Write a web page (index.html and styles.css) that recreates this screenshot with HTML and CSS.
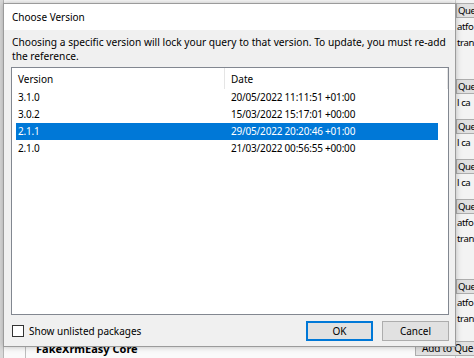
FILE: index.html
```html
<!DOCTYPE html>
<html>
<head>
<meta charset="utf-8">
<link rel="stylesheet" href="styles.css">
</head>
<body>
<div class="app">
  <div class="sidebar"></div>
  <div class="main">
    <div class="pkg-spacer"></div>
    <div class="pkg">
      <div class="pkg-name">FakeXrmEasy Core</div>
      <div class="pkg-add">Add to Que</div>
    </div>
  </div>
  <div class="rightcol">
    <div class="card tall first"><div class="card-btn">Que</div><div class="card-line">atfo</div><div class="card-line">tran</div></div>
    <div class="card"><div class="card-btn">Que</div><div class="card-line">l ca</div></div>
    <div class="card"><div class="card-btn">Que</div><div class="card-line">l ca</div></div>
    <div class="card"><div class="card-btn">Que</div><div class="card-line">l ca</div></div>
    <div class="card tall"><div class="card-btn">Que</div><div class="card-line">atfo</div><div class="card-line">tran</div></div>
    <div class="card tall"><div class="card-btn">Que</div><div class="card-line">atfo</div><div class="card-line">tran</div></div>
  </div>
</div>

<div class="dialog">
  <div class="titlebar">Choose Version</div>
  <div class="dbody">
    <p class="desc">Choosing a specific version will lock your query to that version. To update, you must re-add the reference.</p>
    <div class="listbox">
      <div class="lhead">
        <div class="hcol hver">Version</div>
        <div class="hcol hdate">Date</div>
      </div>
      <div class="lrow"><div class="cver">3.1.0</div><div class="cdate">20/05/2022 11:11:51 +01:00</div></div>
      <div class="lrow"><div class="cver">3.0.2</div><div class="cdate">15/03/2022 15:17:01 +00:00</div></div>
      <div class="lrow sel"><div class="cver">2.1.1</div><div class="cdate">29/05/2022 20:20:46 +01:00</div></div>
      <div class="lrow"><div class="cver">2.1.0</div><div class="cdate">21/03/2022 00:56:55 +00:00</div></div>
    </div>
    <div class="footer">
      <label class="chk"><span class="box"></span><span>Show unlisted packages</span></label>
      <div class="btns">
        <button class="btn ok">OK</button>
        <button class="btn">Cancel</button>
      </div>
    </div>
  </div>
</div>
</body>
</html>
```
FILE: styles.css
```css
* { box-sizing: border-box; }
html, body { margin: 0; padding: 0; }
body {
  width: 474px;
  height: 358px;
  overflow: hidden;
  position: relative;
  background: #f3f3f3;
  font-family: "Noto Sans", "Liberation Sans", sans-serif;
  font-size: 10px;
  color: #000;
}
.app {
  display: flex;
  width: 474px;
  height: 358px;
}
.sidebar {
  width: 4px;
  background: #d9d9d9;
  border-right: 1px solid #b5b5b5;
}
.main {
  flex: 1;
  display: flex;
  flex-direction: column;
  background: #fafafa;
}
.pkg-spacer { flex: 1; }
.pkg {
  height: 14px;
  display: flex;
  align-items: flex-start;
  border-left: 1px solid #bdbdbd;
  margin-left: 21px;
  padding-left: 10px;
}
.pkg-name {
  font-weight: bold;
  font-size: 11px;
  line-height: 12px;
  margin-top: -1px;
  flex: 1;
}
.pkg-add {
  position: relative;
  z-index: 2;
  background: #e1e1e1;
  border: 1px solid #adadad;
  border-right: none;
  padding: 0 0 0 6px;
  line-height: 13px;
  width: 59px;
  margin-right: -19px;
  margin-top: -3px;
  white-space: nowrap;
  letter-spacing: -0.2px;
}
.rightcol {
  width: 19px;
  overflow: hidden;
  background: #f3f3f3;
  border-left: 1px solid #cfcfcf;
  padding-top: 3px;
  white-space: nowrap;
  font-size: 9.6px;
  letter-spacing: -0.4px;
}
.card { height: 40px; }
.card.tall { height: 80px; }
.card.first { height: 76px; }
.card-btn {
  height: 15px;
  line-height: 13px;
  background: #e1e1e1;
  border: 1px solid #adadad;
  border-right: none;
  padding-left: 1px;
  margin-bottom: 1px;
}
.card-line {
  line-height: 16px;
  padding-left: 1px;
}

.dialog {
  position: absolute;
  left: 3px;
  top: 3px;
  width: 453px;
  height: 344px;
  background: #f0f0f0;
  border: 1px solid #9b9b9b;
  box-shadow: 0 0 6px rgba(0,0,0,0.25);
  display: flex;
  flex-direction: column;
  z-index: 5;
}
.titlebar {
  height: 27px;
  background: #fff;
  line-height: 26px;
  padding-left: 8px;
  font-size: 10px;
}
.dbody {
  flex: 1;
  display: flex;
  flex-direction: column;
  padding: 5px 6px 5px 7px;
}
.desc {
  margin: 0 0 0 1px;
  line-height: 14px;
  font-size: 10.2px;
}
.listbox {
  margin-top: 4px;
  height: 248px;
  background: #fff;
  border: 1px solid #828790;
  width: 438px;
}
.lhead {
  display: flex;
  height: 21px;
  align-items: stretch;
}
.hcol {
  line-height: 22px;
  padding-left: 6px;
  border-right: 1px solid #e5e5e5;
}
.hver { width: 213px; }
.hdate { width: 223px; }
.lrow {
  display: flex;
  height: 17px;
  line-height: 17px;
  margin-left: 4px;
  width: 422px;
  letter-spacing: -0.2px;
}
.lrow.sel {
  background: #0078d7;
  color: #fff;
}
.cver { width: 209px; padding-left: 2px; }
.cdate { padding-left: 6px; }
.footer {
  flex: 1;
  display: flex;
  align-items: center;
  justify-content: space-between;
  padding-top: 6px;
}
.chk {
  display: flex;
  align-items: center;
  gap: 5px;
  margin-left: 1px;
}
.box {
  width: 12px;
  height: 12px;
  border: 1px solid #333;
  background: #fff;
}
.btns {
  display: flex;
  gap: 9px;
}
.btn {
  font-family: inherit;
  font-size: 10px;
  width: 67px;
  height: 20px;
  background: #e1e1e1;
  border: 1px solid #adadad;
  padding: 0;
  color: #000;
}
.btn.ok {
  border: 2px solid #0078d7;
}
```
